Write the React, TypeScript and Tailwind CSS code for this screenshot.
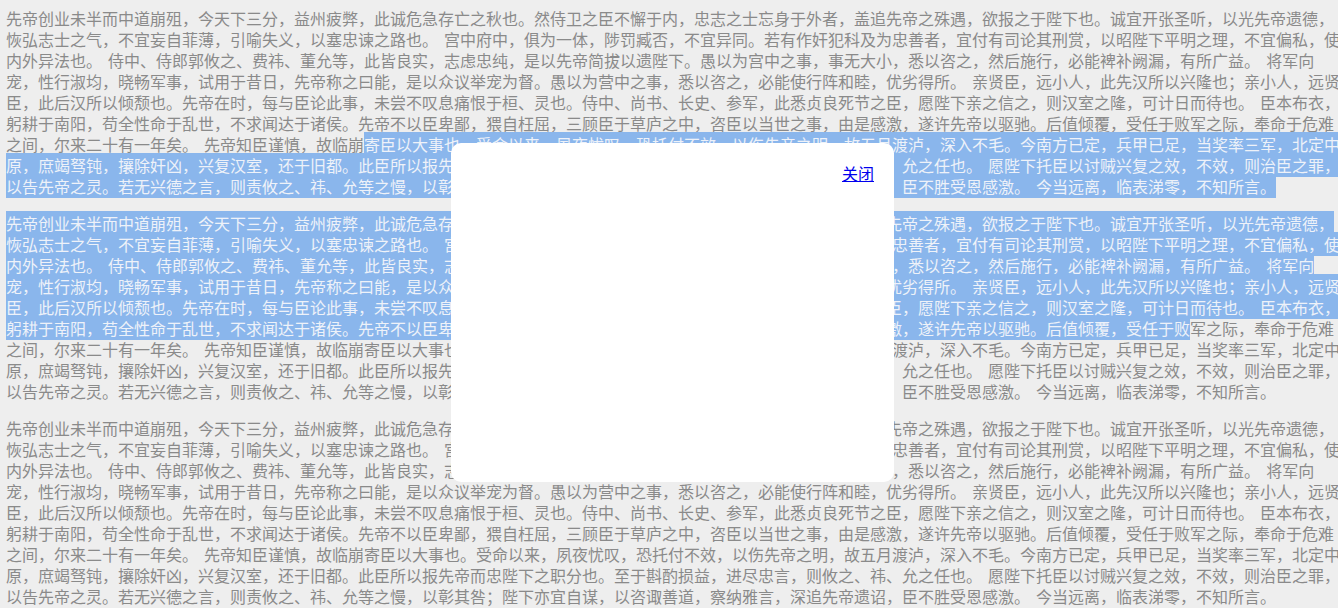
import React from 'react'

const P_START =
  '先帝创业未半而中道崩殂，今天下三分，益州疲弊，此诚危急存亡之秋也。然侍卫之臣不懈于内，忠志之士忘身于外者，盖追先帝之殊遇，欲报之于陛下也。诚宜开张圣听，以光先帝遗德，恢弘志士之气，不宜妄自菲薄，引喻失义，以塞忠谏之路也。 宫中府中，俱为一体，陟罚臧否，不宜异同。若有作奸犯科及为忠善者，宜付有司论其刑赏，以昭陛下平明之理，不宜偏私，使内外异法也。 侍中、侍郎郭攸之、费祎、董允等，此皆良实，志虑忠纯，是以先帝简拔以遗陛下。愚以为宫中之事，事无大小，悉以咨之，然后施行，必能裨补阙漏，有所广益。 将军向宠，性行淑均，晓畅军事，试用于昔日，先帝称之曰能，是以众议举宠为督。愚以为营中之事，悉以咨之，必能使行阵和睦，优劣得所。 亲贤臣，远小人，此先汉所以兴隆也；亲小人，远贤臣，此后汉所以倾颓也。先帝在时，每与臣论此事，未尝不叹息痛恨于桓、灵也。侍中、尚书、长史、参军，此悉贞良死节之臣，愿陛下亲之信之，则汉室之隆，可计日而待也。 臣本布衣，躬耕于南阳，苟全性命于乱世，不求闻达于诸侯。先帝不以臣卑鄙，猥自枉屈，三顾臣于草庐之中，咨臣以当世之事，由是感激，遂许先帝以驱驰。后值倾覆，受任于败'
const P_MID = '军之际，奉命于危难之间，尔来二十有一年矣。 先帝知臣谨慎，故临崩'
const P_END =
  '寄臣以大事也。受命以来，夙夜忧叹，恐托付不效，以伤先帝之明，故五月渡泸，深入不毛。今南方已定，兵甲已足，当奖率三军，北定中原，庶竭驽钝，攘除奸凶，兴复汉室，还于旧都。此臣所以报先帝而忠陛下之职分也。至于斟酌损益，进尽忠言，则攸之、祎、允之任也。 愿陛下托臣以讨贼兴复之效，不效，则治臣之罪，以告先帝之灵。若无兴德之言，则责攸之、祎、允等之慢，以彰其咎；陛下亦宜自谋，以咨诹善道，察纳雅言，深追先帝遗诏，臣不胜受恩感激。 今当远离，临表涕零，不知所言。'

const FULL = P_START + P_MID + P_END

function Sel({ children }: { children: React.ReactNode }) {
  return <span className="bg-[#8ab6ec] text-[#eef2f9]">{children}</span>
}

export default function App() {
  return (
    <div className="relative h-screen w-full overflow-hidden bg-[#eeeeee]">
      {/* page text */}
      <div className="w-[1342px] pl-[6px] pt-[8px] font-['Noto_Sans_CJK_SC',sans-serif] text-[16px] leading-[21px] text-[#8a8a8a] [word-spacing:2.5px]">
        <p className="mb-[16px]">
          {P_START + P_MID}
          <Sel>{P_END}</Sel>
        </p>
        <p className="mb-[16px]">
          <Sel>{P_START}</Sel>
          {P_MID + P_END}
        </p>
        <p className="mb-[16px]">{FULL}</p>
      </div>

      {/* modal */}
      <div className="fixed left-[451px] top-[143px] h-[339px] w-[443px] rounded-[10px] bg-white p-[20px]">
        <div className="flex justify-end">
          <a
            href="#"
            className="font-['Noto_Sans_CJK_SC',sans-serif] text-[16px] leading-[21px] text-[#0000ee] underline"
          >
            关闭
          </a>
        </div>
      </div>
    </div>
  )
}
